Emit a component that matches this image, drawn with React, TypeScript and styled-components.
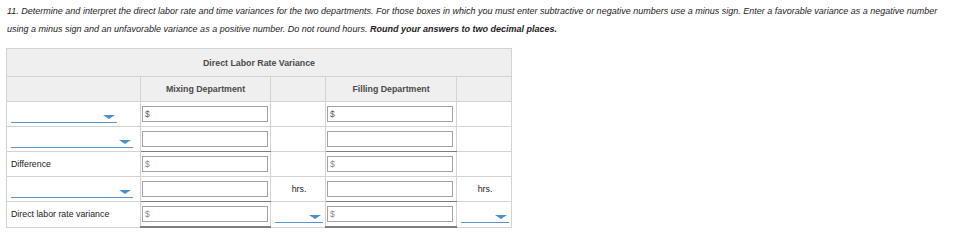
import styled, { createGlobalStyle } from 'styled-components';

const GlobalStyle = createGlobalStyle`
  html, body {
    margin: 0;
    padding: 0;
    background: #ffffff;
  }
  body {
    font-family: "Liberation Sans", Arial, sans-serif;
    color: #1a1a1a;
  }
`;

const Page = styled.div`
  width: 955px;
  padding: 3px 6px 0 6px;
  box-sizing: border-box;
`;

const Prompt = styled.p`
  margin: 0 0 10px 1px;
  font-size: 9px;
  line-height: 17.5px;
  font-style: italic;
  white-space: nowrap;
  color: #1c1c24;
`;

const Strong = styled.b`
  font-weight: bold;
`;

const Grid = styled.table`
  border-collapse: collapse;
  table-layout: fixed;
  width: 505px;
  font-size: 8.8px;
`;

const TitleCell = styled.th`
  height: 27px;
  padding: 0;
  background: #efefef;
  border: 1px solid #d3d3d3;
  color: #4a4a4a;
  font-weight: bold;
  text-align: center;
`;

const HeadCell = styled.th`
  height: 24px;
  padding: 0;
  background: #efefef;
  border: 1px solid #d3d3d3;
  color: #4a4a4a;
  font-weight: bold;
  text-align: center;
`;

const Cell = styled.td<{ $rule?: 'single' | 'double'; $center?: boolean }>`
  height: 24px;
  padding: 0 2px 0 4px;
  border: 1px solid #d3d3d3;
  border-bottom: ${(p) =>
    p.$rule === 'double' ? '2px solid #7d7d7d' : p.$rule === 'single' ? '1px solid #7d7d7d' : '1px solid #d3d3d3'};
  color: #1a1a1a;
  text-align: ${(p) => (p.$center ? 'center' : 'left')};
  vertical-align: middle;
`;

const AmountCell = styled(Cell)`
  padding: 0 2px 0 1px;
`;

const Field = styled.div`
  width: 126px;
  height: 16px;
  box-sizing: border-box;
  border: 1px solid #a2a2a2;
  background: #ffffff;
  display: flex;
  align-items: center;
  padding-left: 2px;
`;

const Dollar = styled.span<{ $muted?: boolean }>`
  color: ${(p) => (p.$muted ? '#8a8a8a' : '#5a5a5a')};
  font-size: 8.5px;
`;

const Dropdown = styled.div<{ $width: number }>`
  position: relative;
  width: ${(p) => p.$width}px;
  height: 14px;
  margin-top: 3px;
  border-bottom: 1px solid #5b97cc;
  box-sizing: border-box;

  &::after {
    content: '';
    position: absolute;
    right: 2px;
    bottom: 3px;
    border-left: 6px solid transparent;
    border-right: 6px solid transparent;
    border-top: 4px solid #4d8fcc;
  }
`;

const Unit = styled.span`
  color: #1a1a1a;
`;

function Money({ sign, muted }: { sign?: boolean; muted?: boolean }) {
  return <Field>{sign && <Dollar $muted={muted}>$</Dollar>}</Field>;
}

export default function App() {
  return (
    <Page>
      <GlobalStyle />
      <Prompt>
        11. Determine and interpret the direct labor rate and time variances for the two departments. For those boxes in
        which you must enter subtractive or negative numbers use a minus sign. Enter a favorable variance as a negative
        number
        <br />
        using a minus sign and an unfavorable variance as a positive number. Do not round hours.{' '}
        <Strong>Round your answers to two decimal places.</Strong>
      </Prompt>

      <Grid>
        <colgroup>
          <col style={{ width: 134 }} />
          <col style={{ width: 130 }} />
          <col style={{ width: 55 }} />
          <col style={{ width: 131 }} />
          <col style={{ width: 55 }} />
        </colgroup>
        <thead>
          <tr>
            <TitleCell colSpan={5}>Direct Labor Rate Variance</TitleCell>
          </tr>
          <tr>
            <HeadCell />
            <HeadCell>Mixing Department</HeadCell>
            <HeadCell />
            <HeadCell>Filling Department</HeadCell>
            <HeadCell />
          </tr>
        </thead>
        <tbody>
          <tr>
            <Cell>
              <Dropdown $width={106} />
            </Cell>
            <AmountCell>
              <Money sign />
            </AmountCell>
            <Cell />
            <AmountCell>
              <Money sign />
            </AmountCell>
            <Cell />
          </tr>
          <tr>
            <Cell>
              <Dropdown $width={122} />
            </Cell>
            <AmountCell $rule="single">
              <Money />
            </AmountCell>
            <Cell />
            <AmountCell $rule="single">
              <Money />
            </AmountCell>
            <Cell />
          </tr>
          <tr>
            <Cell>Difference</Cell>
            <AmountCell>
              <Money sign muted />
            </AmountCell>
            <Cell />
            <AmountCell>
              <Money sign muted />
            </AmountCell>
            <Cell />
          </tr>
          <tr>
            <Cell>
              <Dropdown $width={122} />
            </Cell>
            <AmountCell $rule="single">
              <Money />
            </AmountCell>
            <Cell $center>
              <Unit>hrs.</Unit>
            </Cell>
            <AmountCell $rule="single">
              <Money />
            </AmountCell>
            <Cell $center>
              <Unit>hrs.</Unit>
            </Cell>
          </tr>
          <tr>
            <Cell>Direct labor rate variance</Cell>
            <AmountCell $rule="double">
              <Money sign muted />
            </AmountCell>
            <Cell>
              <Dropdown $width={48} />
            </Cell>
            <AmountCell $rule="double">
              <Money sign muted />
            </AmountCell>
            <Cell>
              <Dropdown $width={48} />
            </Cell>
          </tr>
        </tbody>
      </Grid>
    </Page>
  );
}
